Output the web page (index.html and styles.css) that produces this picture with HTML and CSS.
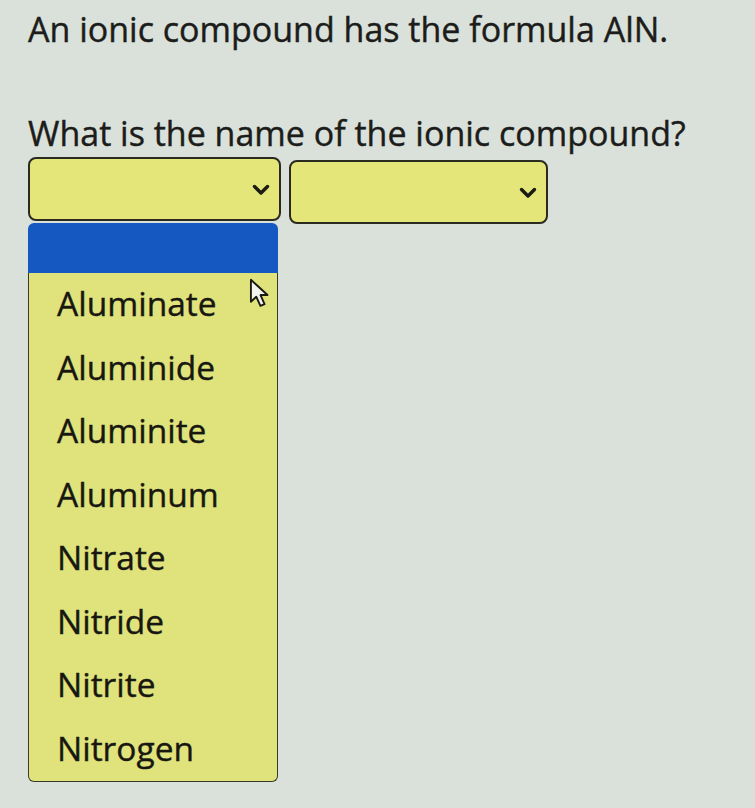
FILE: index.html
```html
<!DOCTYPE html>
<html>
<head>
<meta charset="utf-8">
<link rel="stylesheet" href="styles.css">
</head>
<body>
<div class="page">
  <p class="line line-1">An ionic compound has the formula AlN.</p>
  <p class="line line-2">What is the name of the ionic compound?</p>
  <div class="selects">
    <div class="select select-a">
      <svg class="chev" width="18" height="12" viewBox="0 0 18 12"><path d="M2.5 2.5 L9 9 L15.5 2.5" fill="none" stroke="#1b1b14" stroke-width="3.4" stroke-linecap="round" stroke-linejoin="round"/></svg>
    </div>
    <div class="select select-b">
      <svg class="chev" width="18" height="12" viewBox="0 0 18 12"><path d="M2.5 2.5 L9 9 L15.5 2.5" fill="none" stroke="#1b1b14" stroke-width="3.4" stroke-linecap="round" stroke-linejoin="round"/></svg>
    </div>
  </div>
  <div class="menu">
    <div class="menu-head"></div>
    <ul class="options">
      <li>Aluminate</li>
      <li>Aluminide</li>
      <li>Aluminite</li>
      <li>Aluminum</li>
      <li>Nitrate</li>
      <li>Nitride</li>
      <li>Nitrite</li>
      <li>Nitrogen</li>
    </ul>
    <svg class="cursor" width="24" height="32" viewBox="0 0 20 27"><path d="M1.5 1.5 L1.5 20 L6 15.8 L9.5 23.5 L13 22 L9.6 14.4 L15.5 14.4 Z" fill="#f4f4ee" stroke="#1a1a14" stroke-width="1.6" stroke-linejoin="round"/></svg>
  </div>
</div>
</body>
</html>
```
FILE: styles.css
```css
html, body {
  margin: 0;
  padding: 0;
  background: #d9e1da;
}
.page {
  padding: 9px 0 0 28px;
  font-family: "Open Sans", "Noto Sans", sans-serif;
  color: #1c1c1a;
  -webkit-text-stroke: 0.4px #1c1c1a;
}
.line {
  margin: 0;
  font-size: 34px;
  line-height: 40px;
}
.line-2 {
  margin-top: 64px;
}
.selects {
  display: flex;
  gap: 8px;
  margin-top: 4px;
  align-items: flex-start;
}
.select {
  box-sizing: border-box;
  height: 64px;
  background: #e4e67a;
  border: 2px solid #2a2a20;
  border-radius: 8px;
  display: flex;
  align-items: center;
  justify-content: flex-end;
  padding-right: 9px;
}
.select-a {
  width: 253px;
}
.select-b {
  width: 259px;
  margin-top: 3px;
}
.chev {
  display: block;
  margin-top: 2px;
}
.menu {
  position: relative;
  width: 250px;
  margin-top: -1px;
}
.menu-head {
  height: 50px;
  background: #1558c2;
  border-radius: 6px 6px 0 0;
}
.options {
  list-style: none;
  margin: 0;
  padding: 0;
  background: #e0e37b;
  border: 1.5px solid #3a3a28;
  border-top: none;
  border-radius: 0 0 6px 6px;
}
.options li {
  height: 63.5px;
  line-height: 60px;
  padding-left: 28px;
  font-size: 33.5px;
  color: #17170f;
}
.cursor {
  position: absolute;
  left: 221px;
  top: 55px;
}
```
